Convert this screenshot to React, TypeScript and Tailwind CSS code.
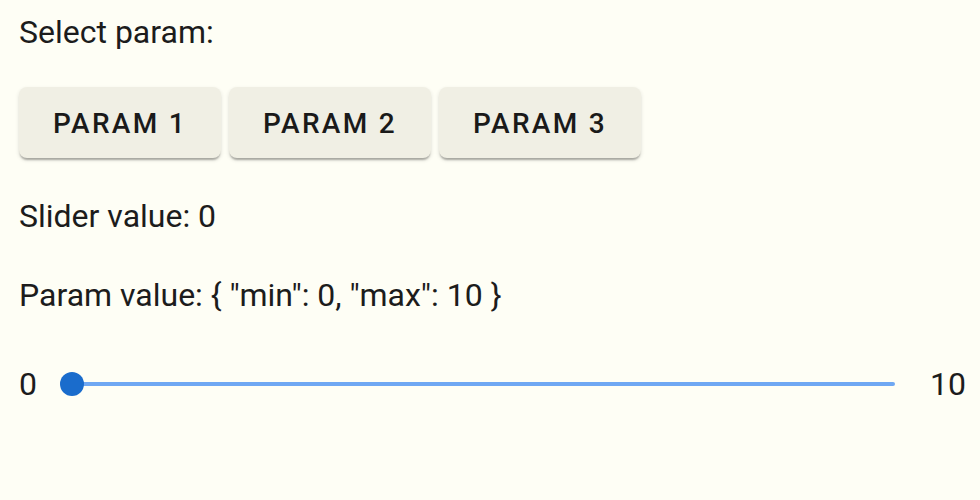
const params = ["Param 1", "Param 2", "Param 3"]

function App() {
  return (
    <div className="h-[500px] w-[980px] bg-[#fefef5] pl-[19px] pr-[14px] pt-4 text-[#1c1c1c] [font-family:Roboto,'Liberation_Sans',sans-serif]">
      <div className="text-[32px] leading-[32px]">Select param:</div>

      <div className="mt-[39px] flex gap-[8px]">
        {params.map((p) => (
          <button
            key={p}
            type="button"
            className="h-[71px] w-[202px] rounded-[8px] bg-[#f0efe4] pt-[3px] text-[28px] font-medium uppercase tracking-[2.3px] text-[#1a1a1a] shadow-[0_3px_2px_-1px_rgba(0,0,0,0.28),0_2px_4px_0_rgba(0,0,0,0.12)]"
          >
            {p}
          </button>
        ))}
      </div>

      <div className="mt-[42px] text-[32px] leading-[32px]">Slider value: 0</div>

      <div className="mt-[47px] text-[32px] leading-[32px]">
        Param value: {'{ "min": 0, "max": 10 }'}
      </div>

      <div className="mt-[57px] flex h-8 items-center">
        <span className="w-[40px] text-[32px] leading-[32px]">0</span>
        <div className="relative ml-[1px] flex h-8 flex-1 items-center">
          <div className="ml-[12px] h-[4px] w-full rounded-full bg-[#6fa8f3]" />
          <div className="absolute left-0 top-1/2 h-[24px] w-[24px] -translate-y-1/2 rounded-full bg-[#1a6ccc]" />
        </div>
        <span className="ml-[35px] text-[32px] leading-[32px]">10</span>
      </div>
    </div>
  )
}

export default App
